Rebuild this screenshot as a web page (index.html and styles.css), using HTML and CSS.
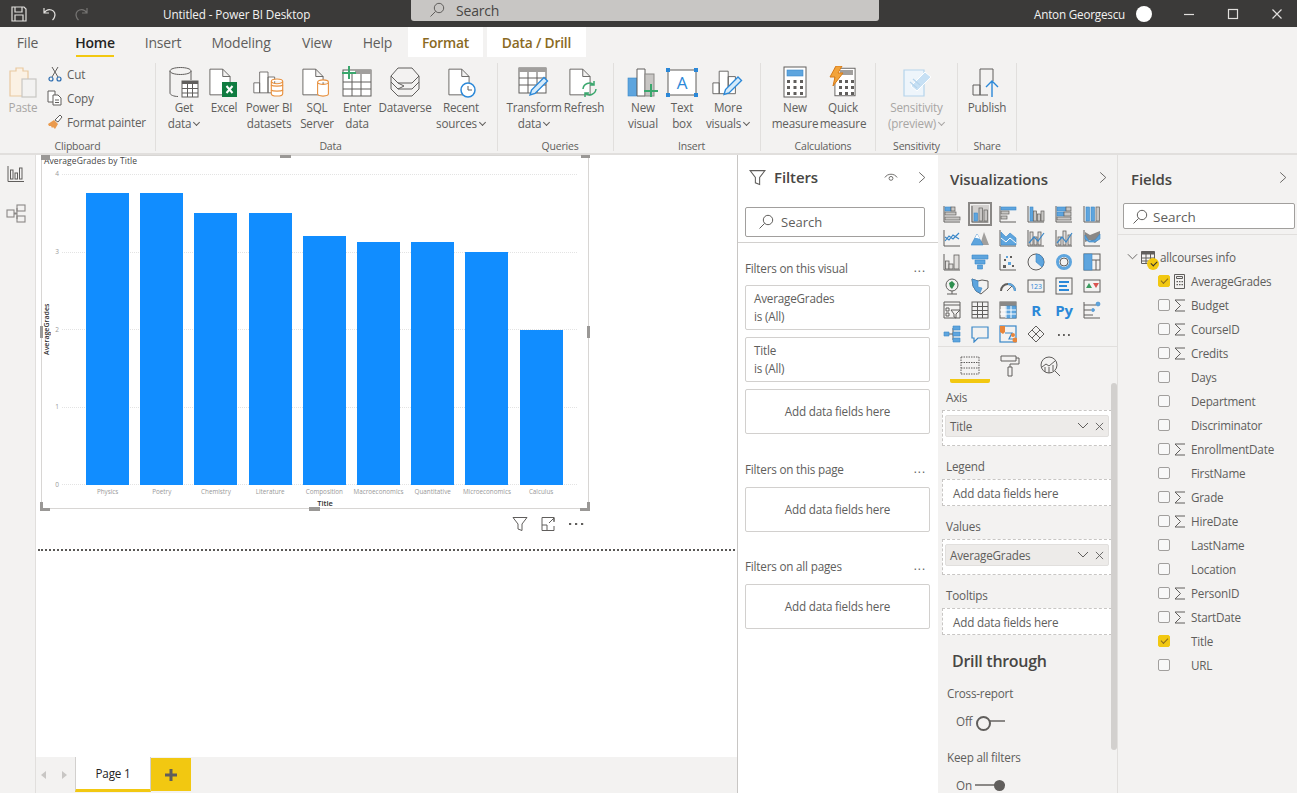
FILE: index.html
```html
<!DOCTYPE html>
<html lang="en">
<head>
<meta charset="utf-8">
<title>Untitled - Power BI Desktop</title>
<link rel="stylesheet" href="styles.css">
</head>
<body>
<svg class="defs" aria-hidden="true">
  <symbol id="search" viewBox="0 0 16 16"><circle cx="10" cy="6" r="4.7" class="s"/><path d="M6.6 9.4 1.5 14.5" class="s"/></symbol>
  <symbol id="chev" viewBox="0 0 10 14"><path d="M2 1.5 8 7l-6 5.5" class="s"/></symbol>
  <symbol id="sigma" viewBox="0 0 13 15"><path d="M12 2H2l5.5 5.5L2 13h10" class="s"/></symbol>
  <symbol id="pencil" viewBox="0 0 20 20"><path d="M15 1.5 18.5 5 6 17.5l-5 1.500 1.500-5z" class="bl"/></symbol>
  <symbol id="cyl" viewBox="0 0 14 20"><path d="M1 3.500v13c0 1.400 2.700 2.500 6 2.500s6-1.100 6-2.500v-13M1 3.500C1 2.100 3.700 1 7 1s6 1.100 6 2.500S10.300 6 7 6 1 4.900 1 3.500" class="or"/></symbol>
  <symbol id="doc" viewBox="0 0 24 30"><path d="M1 1h14l8 8v20H1zM15 1v8h8" class="w"/></symbol>
  <symbol id="bars" viewBox="0 0 30 30"><path d="M1 28V16h7V28zM8 28V3h10v25zM18 28V9h8v19z" class="w"/></symbol>
  <symbol id="calc" viewBox="0 0 24 32"><rect x="1" y="1" width="22" height="30" class="w"/></symbol>
  <symbol id="filter" viewBox="0 0 16 16"><path d="M1 1.500h14L10 8v6.500L6 13V8z" class="s"/></symbol>
  <symbol id="x" viewBox="0 0 10 10"><path d="M1 1l8 8M9 1 1 9" class="s"/></symbol>
  <symbol id="down" viewBox="0 0 12 8"><path d="M1 1l5 5 5-5" class="s"/></symbol>
</svg>

<header class="titlebar">
  <div class="tb-left">
    <svg class="tb-ic" viewBox="0 0 16 16"><path d="M1 1h12l2 2v12H1zM4 1v5h7V1M4 15v-6h8v6" class="lt"/></svg>
    <svg class="tb-ic" viewBox="0 0 16 16"><path d="M2 2v5h5M2 7c2-3 5-4 7.500-3 3 1.200 4 4 3 7-.4 1.200-1.200 2.200-2 3" class="lt"/></svg>
    <svg class="tb-ic tb-dim" viewBox="0 0 16 16"><path d="M14 2v5H9M14 7c-2-3-5-4-7.500-3-3 1.200-4 4-3 7 .4 1.200 1.200 2.200 2 3" class="lt"/></svg>
  </div>
  <div class="tb-title">Untitled - Power BI Desktop</div>
  <div class="tb-search"><svg class="tb-sic"><use href="#search"/></svg><span>Search</span></div>
  <div class="tb-user">Anton Georgescu</div>
  <div class="tb-avatar"></div>
  <div class="tb-win">
    <svg class="win" viewBox="0 0 12 12"><path d="M1 6.500h10" class="lt"/></svg>
    <svg class="win" viewBox="0 0 12 12"><rect x="1.500" y="1.500" width="9" height="9" class="lt"/></svg>
    <svg class="win" viewBox="0 0 12 12"><path d="M1.500 1.500l9 9M10.500 1.500l-9 9" class="lt"/></svg>
  </div>
</header>

<nav class="tabs">
  <div class="tab t-file">File</div>
  <div class="tab t-home">Home</div>
  <div class="tab t-insert">Insert</div>
  <div class="tab t-model">Modeling</div>
  <div class="tab t-view">View</div>
  <div class="tab t-help">Help</div>
  <div class="tab ctx t-format">Format</div>
  <div class="tab ctx t-drill">Data / Drill</div>
</nav>

<section class="ribbon">
  <div class="grp g-clip">
    <div class="btns">
      <div class="rb rb-paste dis">
        <div class="ri"><svg width="30" height="32" viewBox="0 0 30 32"><path d="M2 5h6V2h7v3h5v25H2z" class="paste"/><rect x="14" y="13" width="14" height="18" class="paste2"/></svg></div>
        <span>Paste</span>
      </div>
      <div class="small">
        <div class="sr"><svg class="si" viewBox="0 0 16 16"><path d="M5 1l6 10M11 1 5 11" class="s"/><circle cx="4" cy="13" r="2" class="blo"/><circle cx="12" cy="13" r="2" class="blo"/></svg><span>Cut</span></div>
        <div class="sr"><svg class="si" viewBox="0 0 16 16"><path d="M1 1h7v11H1z" class="w"/><path d="M6 5h5l3 3v7H6zM8 10h4M8 12.500h4" class="w"/></svg><span>Copy</span></div>
        <div class="sr"><svg class="si" viewBox="0 0 16 16"><path d="M1 10l6-4 4 4-3 5-2-2-1 1-1-2-2 0z" fill="#ea9a4d"/><path d="M8 6l5-5 2 2-4 5z" class="w"/></svg><span>Format painter</span></div>
      </div>
    </div>
    <div class="gl">Clipboard</div>
  </div>

  <div class="grp g-data">
    <div class="btns">
      <div class="rb w40">
        <div class="ri"><svg width="30" height="32" viewBox="0 0 30 32"><path d="M1 5v22c0 2 4 3.500 8 3.500M22 5v9M1 5c0-2 4.700-3.500 10.500-3.500S22 3 22 5s-4.700 3.500-10.500 3.500S1 7 1 5" class="s"/><rect x="13" y="15" width="16" height="16" class="w"/><path d="M13 15h16v3H13z" class="d"/><path d="M13 22.500h16M13 27h16M18.500 18v13M23.500 18v13" class="s"/></svg></div>
        <span>Get<br>data<i class="caret"></i></span>
      </div>
      <div class="rb w40">
        <div class="ri"><svg width="30" height="32" viewBox="0 0 30 32"><use href="#doc" width="22" height="30" y="1" x="0"/><rect x="13" y="16" width="15" height="15" fill="#107c41"/><path d="M17.500 20l6 7M23.500 20l-6 7" class="wh"/></svg></div>
        <span>Excel</span>
      </div>
      <div class="rb w50">
        <div class="ri"><svg width="32" height="32" viewBox="0 0 32 32"><use href="#bars" width="25" height="30" y="1"/><use href="#cyl" x="17" y="12" width="14" height="19"/><path d="M18 19c2 1.500 10 1.500 12 0M18 24c2 1.500 10 1.500 12 0" class="or2"/></svg></div>
        <span>Power BI<br>datasets</span>
      </div>
      <div class="rb w46">
        <div class="ri"><svg width="30" height="32" viewBox="0 0 30 32"><use href="#doc" width="22" height="30" y="1"/><use href="#cyl" x="14" y="13" width="14" height="18"/></svg></div>
        <span>SQL<br>Server</span>
      </div>
      <div class="rb w34">
        <div class="ri"><svg width="32" height="32" viewBox="0 0 32 32"><rect x="2" y="4" width="28" height="26" class="w"/><path d="M14 4h16v4H14z" fill="#a19f9d"/><path d="M2 16h28M2 23h28M11 8v22M20 8v22M14 9h-0" class="s"/><path d="M8 0v13M1 7h14" class="gr"/></svg></div>
        <span>Enter<br>data</span>
      </div>
      <div class="rb w62">
        <div class="ri"><svg width="32" height="32" viewBox="0 0 32 32"><path d="M9 2h14l7 8v13l-7 7H9l-7-7V10zM2 10l7 7h14l7-7M2 16l7 7h14l7-7M9 17l6 3-6 3" class="s"/></svg></div>
        <span>Dataverse</span>
      </div>
      <div class="rb w50">
        <div class="ri"><svg width="32" height="32" viewBox="0 0 32 32"><use href="#doc" width="22" height="30" x="3" y="1"/><circle cx="23" cy="24" r="7" class="clk"/><path d="M23 20v4h4" class="s"/></svg></div>
        <span>Recent<br>sources<i class="caret"></i></span>
      </div>
    </div>
    <div class="gl">Data</div>
  </div>

  <div class="grp g-query">
    <div class="btns">
      <div class="rb w54">
        <div class="ri"><svg width="32" height="32" viewBox="0 0 32 32"><rect x="1" y="2" width="27" height="25" class="w"/><path d="M1 2h27v4H1z" fill="#a19f9d"/><path d="M1 12h27M1 19h27M10 6v21M19 6v21" class="s"/><use href="#pencil" x="11" y="9" width="20" height="22"/></svg></div>
        <span>Transform<br>data<i class="caret"></i></span>
      </div>
      <div class="rb w46">
        <div class="ri"><svg width="30" height="32" viewBox="0 0 30 32"><use href="#doc" width="22" height="30" y="1"/><path d="M14 23a6.500 6.500 0 0 1 11-4M27 23a6.500 6.500 0 0 1-11 4M25 15v4h-4M16 31v-4h4" class="gr2"/></svg></div>
        <span>Refresh</span>
      </div>
    </div>
    <div class="gl">Queries</div>
  </div>

  <div class="grp g-insert">
    <div class="btns">
      <div class="rb w40">
        <div class="ri"><svg width="32" height="32" viewBox="0 0 32 32"><rect x="1" y="12" width="9" height="18" class="bf"/><path d="M10 30V3h8v27z" class="w"/><rect x="18" y="8" width="9" height="22" fill="#c8c6c4" stroke="#8a8886"/><path d="M24 18v13M17 25h14" class="gr"/></svg></div>
        <span>New<br>visual</span>
      </div>
      <div class="rb w38">
        <div class="ri"><svg width="32" height="32" viewBox="0 0 32 32"><rect x="2" y="4" width="28" height="25" class="tbx"/><text x="16" y="23" class="tba">A</text><path d="M0 2h4v4H0zM28 2h4v4h-4zM0 27h4v4H0zM28 27h4v4h-4z" fill="#2b88d8"/></svg></div>
        <span>Text<br>box</span>
      </div>
      <div class="rb w54">
        <div class="ri"><svg width="32" height="32" viewBox="0 0 32 32"><use href="#bars" width="27" height="30" y="1"/><use href="#pencil" x="11" y="8" width="20" height="23"/></svg></div>
        <span>More<br>visuals<i class="caret"></i></span>
      </div>
    </div>
    <div class="gl">Insert</div>
  </div>

  <div class="grp g-calc">
    <div class="btns">
      <div class="rb w48">
        <div class="ri"><svg width="26" height="32" viewBox="0 0 26 32"><use href="#calc" x="1" width="24" height="32"/><rect x="5" y="4" width="16" height="6" class="bf"/><path d="M5 14h3v3H5zM11.500 14h3v3h-3zM18 14h3v3h-3zM5 20h3v3H5zM11.500 20h3v3h-3zM18 20h3v3h-3zM5 26h3v3H5zM11.500 26h3v3h-3zM18 26h3v3h-3z" class="d"/></svg></div>
        <span>New<br>measure</span>
      </div>
      <div class="rb w48">
        <div class="ri"><svg width="30" height="32" viewBox="0 0 30 32"><use href="#calc" x="6" width="22" height="32"/><rect x="12" y="4" width="13" height="5" fill="#a19f9d"/><path d="M11 14h3v3h-3zM17 14h3v3h-3zM23 14h3v3h-3zM11 20h3v3h-3zM17 20h3v3h-3zM23 20h3v3h-3zM11 26h3v3h-3zM17 26h3v3h-3zM23 26h3v3h-3z" class="d"/><path d="M8 0h6l-4 7h5L5 20l2-9H2z" fill="#f2a33a" stroke="#d87b16"/></svg></div>
        <span>Quick<br>measure</span>
      </div>
    </div>
    <div class="gl">Calculations</div>
  </div>

  <div class="grp g-sens">
    <div class="btns">
      <div class="rb full dis">
        <div class="ri"><svg width="32" height="32" viewBox="0 0 32 32"><path d="M3 4h20v26H3z" class="sens"/><path d="M10 20 24 6l6 5-14 14z" fill="#c7e0f4" stroke="#fff"/><path d="M9 16l7 6M12 13l7 6" class="sens"/></svg></div>
        <span>Sensitivity<br>(preview)<i class="caret"></i></span>
      </div>
    </div>
    <div class="gl">Sensitivity</div>
  </div>

  <div class="grp g-share">
    <div class="btns">
      <div class="rb full">
        <div class="ri"><svg width="32" height="32" viewBox="0 0 32 32"><path d="M2 29V19h7v10zM9 29V3h13v12M9 29h8" class="s"/><path d="M21 31V15M15 21l6-6 6 6" class="bs"/></svg></div>
        <span>Publish</span>
      </div>
    </div>
    <div class="gl">Share</div>
  </div>
</section>

<main class="main">
  <aside class="rail">
    <svg class="rail-ic" viewBox="0 0 18 18"><path d="M1 1v15.500h16" class="s"/><rect x="3.500" y="5" width="2.500" height="9" class="s"/><rect x="8" y="8" width="2.500" height="6" class="s"/><rect x="12.500" y="3" width="2.500" height="11" class="s"/></svg>
    <svg class="rail-ic ri2" viewBox="0 0 20 20"><rect x="1" y="6" width="7" height="7" class="m"/><rect x="11" y="1" width="8" height="6" class="m"/><rect x="11" y="12" width="8" height="6" class="m"/><path d="M8 9h3V4M8 10h3v5" class="m"/></svg>
  </aside>

  <div class="canvas">
    <div class="page">
      <div class="visual">
        <i class="h h-tl"></i><i class="h h-tm"></i><i class="h h-tr"></i><i class="h h-ml"></i><i class="h h-mr"></i><i class="h h-bl"></i><i class="h h-bm"></i><i class="h h-br"></i>
        <div class="v-title">AverageGrades by Title</div>
        <div class="v-chart">
          <div class="y-title">AverageGrades</div>
          <div class="y-labels"><span>4</span><span>3</span><span>2</span><span>1</span><span>0</span></div>
          <div class="plot">
            <div class="grid"><i></i><i></i><i></i><i></i><i></i></div>
            <div class="bars">
              <div class="slot"><div class="bar" style="height:93.75%"></div></div>
              <div class="slot"><div class="bar" style="height:93.75%"></div></div>
              <div class="slot"><div class="bar" style="height:87.5%"></div></div>
              <div class="slot"><div class="bar" style="height:87.5%"></div></div>
              <div class="slot"><div class="bar" style="height:80%"></div></div>
              <div class="slot"><div class="bar" style="height:78.25%"></div></div>
              <div class="slot"><div class="bar" style="height:78.25%"></div></div>
              <div class="slot"><div class="bar" style="height:75%"></div></div>
              <div class="slot"><div class="bar" style="height:50%"></div></div>
            </div>
          </div>
        </div>
        <div class="cats"><span>Physics</span><span>Poetry</span><span>Chemistry</span><span>Literature</span><span>Composition</span><span>Macroeconomics</span><span>Quantitative</span><span>Microeconomics</span><span>Calculus</span></div>
        <div class="x-title">Title</div>
      </div>
      <div class="v-ctrl">
        <svg class="vc"><use href="#filter"/></svg>
        <svg class="vc" viewBox="0 0 16 16"><path d="M14 6V1.500H2v13h12V10M2 9h5v5.500M9 7l5-5M10 1.500h4v4" class="s"/></svg>
        <svg class="vc" viewBox="0 0 16 16"><path d="M1 8h2.200M7 8h2.200M13 8h2.200" class="dots"/></svg>
      </div>
      <div class="page-end"></div>
    </div>
    <div class="pagebar">
      <div class="arrows"><i class="al"></i><i class="ar"></i></div>
      <div class="ptab">Page 1</div>
      <div class="padd"><svg width="12" height="12" viewBox="0 0 12 12"><path d="M6 0v12M0 6h12" class="plus"/></svg></div>
    </div>
  </div>

  <aside class="filters">
    <div class="f-head">
      <svg class="f-fn"><use href="#filter"/></svg>
      <h2>Filters</h2>
      <svg class="f-eye" viewBox="0 0 16 12"><path d="M1 6c3-5 11-5 14 0" class="s"/><circle cx="8" cy="7" r="2.200" class="s"/></svg>
      <svg class="f-ch"><use href="#chev"/></svg>
    </div>
    <div class="searchbox f-search"><svg class="sb-ic"><use href="#search"/></svg><span>Search</span></div>
    <div class="f-rule"></div>
    <div class="f-sec first"><div class="f-h"><span>Filters on this visual</span><b>...</b></div>
      <div class="f-card">AverageGrades<br>is (All)</div>
      <div class="f-card">Title<br>is (All)</div>
      <div class="f-card add">Add data fields here</div>
    </div>
    <div class="f-sec sec-page"><div class="f-h"><span>Filters on this page</span><b>...</b></div>
      <div class="f-card add">Add data fields here</div>
    </div>
    <div class="f-sec sec-all"><div class="f-h"><span>Filters on all pages</span><b>...</b></div>
      <div class="f-card add">Add data fields here</div>
    </div>
  </aside>

  <aside class="viz">
    <div class="p-head"><h2>Visualizations</h2><svg class="p-ch"><use href="#chev"/></svg></div>
    <div class="vgrid">
      <div class="vi"><svg viewBox="0 0 18 18"><path d="M1 1v16h16" class="s"/><rect x="2" y="2" width="6" height="4" class="bf"/><rect x="8" y="2" width="4" height="4" class="g1"/><rect x="2" y="7" width="11" height="3" class="g1"/><rect x="2" y="12" width="15" height="3" class="g1"/></svg></div>
      <div class="vi sel"><svg viewBox="0 0 18 18"><path d="M1 1v16h16" class="s"/><rect x="3" y="8" width="3.500" height="8" class="bf"/><rect x="8" y="3" width="3.500" height="13" class="g1"/><rect x="13" y="5" width="3.500" height="11" class="g1"/></svg></div>
      <div class="vi"><svg viewBox="0 0 18 18"><path d="M1 1v16h16" class="s"/><rect x="2" y="2" width="15" height="3" class="bf"/><rect x="2" y="6" width="8" height="3" class="g1"/><rect x="2" y="11" width="6" height="3" class="g1"/></svg></div>
      <div class="vi"><svg viewBox="0 0 18 18"><path d="M1 1v16h16" class="s"/><rect x="3" y="2" width="3" height="14" class="bf"/><rect x="6.500" y="6" width="3" height="10" class="g1"/><rect x="10.500" y="9" width="3" height="7" class="g1"/><rect x="14" y="6" width="3" height="10" class="g1"/></svg></div>
      <div class="vi"><svg viewBox="0 0 18 18"><path d="M1 1v16h16" class="s"/><rect x="2" y="2" width="9" height="4" class="bf"/><rect x="11" y="2" width="5" height="4" class="g1"/><rect x="2" y="7" width="7" height="4" class="bf"/><rect x="9" y="7" width="7" height="4" class="g1"/><rect x="2" y="12" width="14" height="3" class="g1"/></svg></div>
      <div class="vi"><svg viewBox="0 0 18 18"><path d="M1 1v16h16" class="s"/><rect x="3" y="2" width="3.500" height="14" class="bf"/><rect x="8" y="2" width="3.500" height="14" class="bf"/><rect x="13" y="2" width="3.500" height="14" class="g1"/></svg></div>

      <div class="vi"><svg viewBox="0 0 18 18"><path d="M1 1v16h16" class="s"/><path d="M2 12l4-5 4 3 6-6M2 8l4 3 4-5 6 4" class="bs1"/></svg></div>
      <div class="vi"><svg viewBox="0 0 18 18"><path d="M9 16 13 3l5 13z" fill="#a19f9d"/><path d="M0 16 6 5l6 11z" class="bf"/><path d="M4 9l2-4 3 5-3-1z" fill="#fff"/></svg></div>
      <div class="vi"><svg viewBox="0 0 18 18"><path d="M1 1v16h16" class="s"/><path d="M2 3l5 5 4-4 6 5v7H2z" class="bf"/><path d="M2 9l5 4 4-4 6 5" stroke="#fff" fill="none"/></svg></div>
      <div class="vi"><svg viewBox="0 0 18 18"><path d="M1 1v16h16" class="s"/><rect x="3" y="3" width="3" height="13" class="g2"/><rect x="7" y="8" width="3" height="8" class="g2"/><rect x="11" y="3" width="3" height="13" class="g2"/><path d="M2 14l5-6 4 4 6-8" class="bs1"/></svg></div>
      <div class="vi"><svg viewBox="0 0 18 18"><path d="M1 1v16h16" class="s"/><rect x="3" y="8" width="3" height="8" class="g2"/><rect x="8" y="2" width="3" height="14" class="g2"/><rect x="13" y="6" width="3" height="10" class="g2"/><path d="M2 14l5-6 4 5 6-9" class="bs1"/></svg></div>
      <div class="vi"><svg viewBox="0 0 18 18"><path d="M1 1v16h16" class="s"/><path d="M2 3l5 3 5-2 5-2v7l-5 5-5-3-5 2z" fill="#8a8886"/><path d="M2 6l4 6 6-1 5-6v5l-5 3-6 0-4-3z" class="bf"/></svg></div>

      <div class="vi"><svg viewBox="0 0 18 18"><path d="M1 1v16h16" class="s"/><rect x="2.500" y="8" width="3.500" height="8" class="g2"/><rect x="6" y="11" width="4" height="5" class="g2"/><rect x="11" y="2" width="5" height="14" class="g2"/></svg></div>
      <div class="vi"><svg viewBox="0 0 18 18"><path d="M1 2h16v4H1zM4 7h10v4H4zM6.500 12h5v4h-5z" class="bf"/></svg></div>
      <div class="vi"><svg viewBox="0 0 18 18"><path d="M1 1v16h16" class="s"/><path d="M5 6h2v2H5zM11 3h2v2h-2zM4 12h3v3H4zM13 12h2v2h-2z" class="d"/><path d="M7 3h2v2H7zM9 9h3v3H9z" fill="#5ea5de"/></svg></div>
      <div class="vi"><svg viewBox="0 0 18 18"><circle cx="9" cy="9" r="8" class="s"/><path d="M9 1a8 8 0 0 1 6 13L9 9z" class="bf"/></svg></div>
      <div class="vi"><svg viewBox="0 0 18 18"><circle cx="9" cy="9" r="6.500" fill="none" stroke="#5ea5de" stroke-width="3"/><circle cx="9" cy="9" r="4" class="s"/></svg></div>
      <div class="vi"><svg viewBox="0 0 18 18"><rect x="1" y="1" width="16" height="16" class="s"/><rect x="1" y="1" width="8" height="16" class="bf"/><path d="M9 7h8M13 7v10" class="s"/></svg></div>

      <div class="vi"><svg viewBox="0 0 18 18"><circle cx="9" cy="8" r="6" class="s"/><path d="M6 6l3-2 3 3-3 5-2-2z" fill="#2f8f4f"/><path d="M4 17h10M9 14v3" class="s"/></svg></div>
      <div class="vi"><svg viewBox="0 0 18 18"><path d="M1 2l6 2 4-1 6 1v7l-7 6-5-3-3-5z" class="s"/><path d="M1 2l6 2 0 6 4 1-2 5-4-2-3-5z" class="bf"/></svg></div>
      <div class="vi"><svg viewBox="0 0 18 18"><path d="M2 14a7 7 0 0 1 14 0" fill="none" stroke="#605e5c" stroke-width="2"/><path d="M9 7a7 7 0 0 1 7 7" fill="none" stroke="#5ea5de" stroke-width="2"/><path d="M8 14l5-5" class="s"/></svg></div>
      <div class="vi"><svg viewBox="0 0 18 18"><rect x="1" y="3" width="16" height="12" class="s"/><text x="9" y="12" class="t123">123</text></svg></div>
      <div class="vi"><svg viewBox="0 0 18 18"><rect x="1" y="1" width="16" height="16" class="s"/><path d="M4 5h10M4 9h8M4 13h10" class="bs2"/></svg></div>
      <div class="vi"><svg viewBox="0 0 18 18"><rect x="1" y="3" width="16" height="12" class="s"/><path d="M3 11l3-5 3 5z" fill="#3a9c5f"/><path d="M10 6h6l-3 5z" fill="#d9534f"/></svg></div>

      <div class="vi"><svg viewBox="0 0 18 18"><path d="M1 1h16v16H1zM1 4h16M3 7h3v3H3zM3 12h3v3H3z" class="s"/><path d="M8 9h9l-4 4v4l-2-1v-3z" fill="#f3f2f1" stroke="#605e5c"/></svg></div>
      <div class="vi"><svg viewBox="0 0 18 18"><rect x="1" y="1" width="16" height="16" class="s"/><path d="M1 5.500h16M1 9.500h16M1 13.500h16M6.500 1v16M11.500 1v16" class="s"/></svg></div>
      <div class="vi"><svg viewBox="0 0 18 18"><rect x="1" y="1" width="16" height="16" class="s"/><rect x="1" y="1" width="16" height="4" fill="#8a8886"/><rect x="7" y="5" width="10" height="12" class="bf"/><path d="M1 9h16M1 13h16M7 5v12M12 5v12" stroke="#fff" fill="none"/></svg></div>
      <div class="vi vt"><span class="rr">R</span></div>
      <div class="vi vt"><span class="py">Py</span></div>
      <div class="vi"><svg viewBox="0 0 18 18"><path d="M1 1v16h16M1 4h12M1 9h7M1 14h9" class="s"/><circle cx="15" cy="3" r="2" class="bf"/><circle cx="10" cy="9" r="1.500" class="bf"/></svg></div>

      <div class="vi"><svg viewBox="0 0 18 18"><path d="M5 9h5M10 3v12" class="s"/><path d="M1 7h5v4H1zM10 1h7v4h-7zM10 7h7v4h-7zM10 13h7v4h-7z" class="bf"/></svg></div>
      <div class="vi"><svg viewBox="0 0 18 18"><path d="M1 2h16v11H7l-4 4v-4H1z" class="bs1"/></svg></div>
      <div class="vi"><svg viewBox="0 0 18 18"><rect x="1" y="1" width="16" height="16" class="bs1"/><path d="M1 1h5v6l-2 2-3-2z" fill="#e8853a"/><path d="M6 8h7l-3 6h7" class="bs1"/><circle cx="14" cy="10" r="2" fill="#e8853a"/><circle cx="16" cy="15" r="2.500" fill="#e8853a"/></svg></div>
      <div class="vi"><svg viewBox="0 0 18 18"><path d="M9 1l8 8-8 8-8-8zM5 5l4 4 4-4M5 13l4-4 4 4" class="s"/></svg></div>
      <div class="vi vt"><svg viewBox="0 0 18 18"><path d="M3 10h1.800M8 10h1.800M13 10h1.800" class="dots"/></svg></div>
    </div>
    <div class="v-tabs">
      <div class="vtab on"><svg viewBox="0 0 22 22"><path d="M2 2h18M2 7.500h18M2 13h18M2 19h18M2 2v17M20 2v17" class="dash"/></svg></div>
      <div class="vtab"><svg viewBox="0 0 22 22"><path d="M2 1h15v5H2zM17 3h3v6h-9v3M9 12h4v9H9z" class="s"/></svg></div>
      <div class="vtab"><svg viewBox="0 0 22 22"><circle cx="10" cy="10" r="8" class="s"/><path d="M3 12l4-3 3 2 6-5M6 12v5M10 12v6M14 10v6M16 16l5 5" class="s"/></svg></div>
    </div>
    <div class="wells">
      <div class="wl">Axis</div>
      <div class="well w-chip"><div class="chip"><span>Title</span><svg class="c-d"><use href="#down"/></svg><svg class="c-x"><use href="#x"/></svg></div></div>
      <div class="wl">Legend</div>
      <div class="well w-add">Add data fields here</div>
      <div class="wl">Values</div>
      <div class="well w-chip"><div class="chip"><span>AverageGrades</span><svg class="c-d"><use href="#down"/></svg><svg class="c-x"><use href="#x"/></svg></div></div>
      <div class="wl">Tooltips</div>
      <div class="well w-add">Add data fields here</div>
      <h3>Drill through</h3>
      <div class="dl">Cross-report</div>
      <div class="tg"><span>Off</span><i class="tg-off"></i></div>
      <div class="dl d2">Keep all filters</div>
      <div class="tg"><span>On</span><i class="tg-on"></i></div>
    </div>
    <div class="scroll"></div>
  </aside>

  <aside class="fields">
    <div class="p-head"><h2>Fields</h2><svg class="p-ch"><use href="#chev"/></svg></div>
    <div class="searchbox fl-search"><svg class="sb-ic"><use href="#search"/></svg><span>Search</span></div>
    <div class="fl-rule"></div>
    <div class="tbl">
      <svg class="tbl-ch"><use href="#down"/></svg>
      <div class="tbl-ic"><svg viewBox="0 0 14 13"><path d="M.5.500h13v12H.5z" class="s"/><path d="M.5.500h13v3H.5z" class="d"/><path d="M.5 7h13M.5 10h13M5 3v9M9.500 3v9" class="s"/></svg><i class="badge"></i></div>
      <span>allcourses info</span>
    </div>
    <div class="fr"><i class="cb on"></i><svg class="fi" viewBox="0 0 13 15"><path d="M1.500.500h10v14h-10z" class="s"/><path d="M3.500 2.500h6v2h-6z" class="s"/><path d="M3.500 7h1.500v1.300H3.500zM6 7h1.500v1.300H6zM8.500 7h1.500v1.300H8.500zM3.500 10h1.500v1.300H3.500zM6 10h1.500v1.300H6zM8.500 10h1.500v1.300H8.500z" class="d"/></svg><span>AverageGrades</span></div>
    <div class="fr"><i class="cb"></i><svg class="fi"><use href="#sigma"/></svg><span>Budget</span></div>
    <div class="fr"><i class="cb"></i><svg class="fi"><use href="#sigma"/></svg><span>CourseID</span></div>
    <div class="fr"><i class="cb"></i><svg class="fi"><use href="#sigma"/></svg><span>Credits</span></div>
    <div class="fr"><i class="cb"></i><svg class="fi"></svg><span>Days</span></div>
    <div class="fr"><i class="cb"></i><svg class="fi"></svg><span>Department</span></div>
    <div class="fr"><i class="cb"></i><svg class="fi"></svg><span>Discriminator</span></div>
    <div class="fr"><i class="cb"></i><svg class="fi"><use href="#sigma"/></svg><span>EnrollmentDate</span></div>
    <div class="fr"><i class="cb"></i><svg class="fi"></svg><span>FirstName</span></div>
    <div class="fr"><i class="cb"></i><svg class="fi"><use href="#sigma"/></svg><span>Grade</span></div>
    <div class="fr"><i class="cb"></i><svg class="fi"><use href="#sigma"/></svg><span>HireDate</span></div>
    <div class="fr"><i class="cb"></i><svg class="fi"></svg><span>LastName</span></div>
    <div class="fr"><i class="cb"></i><svg class="fi"></svg><span>Location</span></div>
    <div class="fr"><i class="cb"></i><svg class="fi"><use href="#sigma"/></svg><span>PersonID</span></div>
    <div class="fr"><i class="cb"></i><svg class="fi"><use href="#sigma"/></svg><span>StartDate</span></div>
    <div class="fr"><i class="cb on"></i><svg class="fi"></svg><span>Title</span></div>
    <div class="fr"><i class="cb"></i><svg class="fi"></svg><span>URL</span></div>
  </aside>
</main>
</body>
</html>
```

FILE: styles.css
```css
* { box-sizing: border-box; }
html, body { margin: 0; height: 100%; }
body {
  width: 1297px; height: 793px; overflow: hidden;
  font-family: "Open Sans", "Noto Sans", "Liberation Sans", sans-serif;
  font-size: 11.7px; letter-spacing: -.2px; color: #605e5c; background: #f3f2f1;
  display: flex; flex-direction: column;
}
h2, h3 { margin: 0; }
i { font-style: normal; }
.defs { width: 0; height: 0; position: absolute; }

/* svg paint classes */
.s { fill: none; stroke: #605e5c; stroke-width: 1; }
.w { fill: #fff; stroke: #605e5c; stroke-width: 1; }
.d { fill: #605e5c; }
.lt { fill: none; stroke: #e1dfdd; stroke-width: 1.2; }
.or { fill: #fff; stroke: #e8913f; stroke-width: 1.2; }
.or2 { fill: none; stroke: #e8913f; stroke-width: 1.2; }
.bl { fill: #d6ebfa; stroke: #2b88d8; stroke-width: 1.4; }
.bf { fill: #5ea5de; stroke: #3a87c8; stroke-width: .6; }
.bs { fill: none; stroke: #2b88d8; stroke-width: 1.4; }
.bs1 { fill: none; stroke: #3a87c8; stroke-width: 1.2; }
.bs2 { fill: none; stroke: #2b88d8; stroke-width: 1.8; }
.blo { fill: none; stroke: #2b6cb0; stroke-width: 1.2; }
.wh { fill: none; stroke: #fff; stroke-width: 2; }
.gr { fill: none; stroke: #3aa76d; stroke-width: 2; }
.gr2 { fill: none; stroke: #3aa76d; stroke-width: 1.5; }
.g1 { fill: #c8c6c4; stroke: #605e5c; stroke-width: .7; }
.g2 { fill: #e1dfdd; stroke: #605e5c; stroke-width: .8; }
.m { fill: none; stroke: #8a8886; stroke-width: 1.1; }
.clk { fill: #fff; stroke: #2b88d8; stroke-width: 1.5; }
.tbx { fill: #fff; stroke: #605e5c; stroke-width: 1; }
.tba { font-size: 17px; fill: #2b88d8; text-anchor: middle; font-family: "Open Sans", sans-serif; }
.paste { fill: #fbf1e4; stroke: #e9c9a0; stroke-width: 1.2; }
.paste2 { fill: #f3f2f1; stroke: #c8c6c4; stroke-width: 1.2; }
.sens { fill: #eef5fb; stroke: #b5d4ec; stroke-width: 1.2; }
.dots { fill: none; stroke: #605e5c; stroke-width: 2; }
.plus { fill: none; stroke: #605e5c; stroke-width: 3; }
.dash { fill: none; stroke: #605e5c; stroke-width: 1; stroke-dasharray: 1.500 1; }
.t123 { font-size: 7px; fill: #2b88d8; text-anchor: middle; font-family: "Open Sans", sans-serif; }

/* title bar */
.titlebar {
  height: 27px; flex: none; background: #3b3a39; color: #f3f2f1;
  display: flex; align-items: center;
}
.tb-left { width: 163px; padding-left: 11px; display: flex; gap: 15px; flex: none; }
.tb-ic { width: 16px; height: 16px; }
.tb-dim { opacity: .35; }
.tb-title { width: 248px; flex: none; letter-spacing: -.1px; }
.tb-search {
  width: 468px; height: 21px; flex: none; align-self: flex-start; background: #c8c6c4;
  border-radius: 0 0 3px 3px; display: flex; align-items: center; padding: 0 0 1px 18px;
  color: #484644; font-size: 14px; gap: 11px;
}
.tb-sic { width: 16px; height: 16px; }
.tb-user { margin-left: 155px; width: 102px; flex: none; white-space: nowrap; }
.tb-avatar { width: 16px; height: 16px; border-radius: 50%; background: #fff; flex: none; }
.tb-win { display: flex; margin-left: 31px; gap: 32px; }
.win { width: 12px; height: 12px; }

/* tabs */
.tabs { height: 30px; flex: none; display: flex; background: #f3f2f1; font-size: 14px; }
.tab { display: flex; align-items: center; justify-content: center; position: relative; color: #605e5c; padding-top: 1px; }
.t-file { width: 55px; }
.t-home { width: 80px; color: #252423; font-weight: 600; }
.t-home::after { content: ""; position: absolute; left: 21px; width: 38px; bottom: 0; height: 2px; background: #f2c811; }
.t-insert { width: 56px; }
.t-model { width: 100px; }
.t-view { width: 52px; }
.t-help { width: 65px; padding-left: 4px; }
.ctx { background: #fff; color: #8a6a1f; font-weight: 600; font-size: 13.8px; }
.t-format { width: 75px; margin-right: 4px; }
.t-drill { width: 99px; }

/* ribbon */
.ribbon { height: 98px; flex: none; display: flex; padding-top: 6px; background: #f3f2f1; border-bottom: 2px solid #e1dfdd; }
.grp { display: flex; flex-direction: column; height: 88px; border-right: 1px solid #e1dfdd; }
.btns { height: 76px; display: flex; padding-top: 1px; }
.gl { height: 12px; line-height: 14px; text-align: center; font-size: 10.5px; color: #605e5c; }
.g-clip { width: 156px; }
.g-data { width: 342px; padding-left: 8px; }
.g-query { width: 116px; padding-left: 9px; }
.g-insert { width: 147px; padding-left: 9px; }
.g-calc { width: 115px; padding-left: 10px; }
.g-sens { width: 82px; }
.g-share { width: 59px; }
.rb { display: flex; flex-direction: column; align-items: center; text-align: center; line-height: 16px; white-space: nowrap; flex: none; }
.ri { height: 35px; display: flex; align-items: flex-start; justify-content: center; padding-top: 2px; }
.dis { color: #a8a6a4; }
.w34 { width: 34px; } .w38 { width: 38px; } .w40 { width: 40px; } .w46 { width: 46px; }
.w48 { width: 48px; } .w50 { width: 50px; } .w54 { width: 54px; } .w62 { width: 62px; }
.full { width: 100%; }
.rb-paste { width: 46px; }
.caret { display: inline-block; width: 5px; height: 5px; margin: 0 1px 3px 3px; border-right: 1.2px solid currentColor; border-bottom: 1.2px solid currentColor; transform: rotate(45deg); }
.small { padding-left: 1px; margin-top: -2px; }
.sr { height: 24px; display: flex; align-items: center; gap: 4px; white-space: nowrap; }
.si { width: 16px; height: 16px; flex: none; }

/* main */
.main { flex: 1; min-height: 0; display: flex; }
.rail { width: 36px; flex: none; background: #f3f2f1; border-right: 1px solid #e1dfdd; display: flex; flex-direction: column; align-items: center; padding: 10px 3px 0 0; }
.rail-ic { width: 18px; height: 18px; }
.ri2 { margin-top: 21px; width: 20px; height: 20px; }

.canvas { width: 701px; flex: none; display: flex; flex-direction: column; background: #fff; }
.page { flex: 1; min-height: 0; }
.visual { position: relative; width: 548px; height: 354px; margin-left: 5px; border: 1px solid #d8d6d4; background: #fff; letter-spacing: 0; }
.h { position: absolute; background: #9a9896; }
.h-tl { left: -1px; top: -1px; width: 9px; height: 5px; }
.h-tm { left: 238px; top: -1px; width: 11px; height: 3px; }
.h-tr { right: -2px; top: -1px; width: 9px; height: 3px; }
.h-ml { left: -2px; top: 170px; width: 3px; height: 12px; }
.h-mr { right: -2px; top: 170px; width: 3px; height: 12px; }
.h-bl { left: -2px; bottom: -3px; width: 10px; height: 9px; background: none; border-left: 3px solid #9a9896; border-bottom: 3px solid #9a9896; }
.h-bm { left: 267px; bottom: -3px; width: 11px; height: 4px; }
.h-br { right: -2px; bottom: -3px; width: 10px; height: 9px; background: none; border-right: 3px solid #9a9896; border-bottom: 3px solid #9a9896; }
.v-title { height: 10px; line-height: 10px; font-size: 8.5px; letter-spacing: .1px; color: #444; padding-left: 2px; white-space: nowrap; }
.v-chart { display: flex; height: 311px; margin-top: 8px; }
.y-title { width: 10px; writing-mode: vertical-rl; transform: rotate(180deg); text-align: center; font-size: 7px; font-weight: 600; color: #333; line-height: 10px; white-space: nowrap; }
.y-labels { width: 10px; display: flex; flex-direction: column; justify-content: space-between; align-items: center; font-size: 6.5px; color: #999; }
.y-labels span { height: 0; line-height: 0; }
.plot { position: relative; width: 515px; height: 311px; padding-left: 18.5px; }
.grid { position: absolute; inset: 0; display: flex; flex-direction: column; justify-content: space-between; }
.grid i { display: block; height: 0; border-top: 1px dotted #e3e3e3; }
.bars { position: relative; display: flex; height: 100%; }
.slot { width: 54.2px; height: 100%; display: flex; justify-content: center; align-items: flex-end; }
.bar { width: 43px; background: #118dff; }
.cats { display: flex; height: 12px; margin-left: 38.5px; align-items: center; font-size: 6.3px; color: #999; }
.cats span { width: 54.2px; text-align: center; white-space: nowrap; }
.x-title { height: 10px; line-height: 10px; text-align: center; font-size: 7.5px; font-weight: 600; color: #333; padding-left: 18px; margin-left: 2px; margin-top: 1px; }
.v-ctrl { width: 548px; margin-left: 5px; height: 16px; margin-top: 7px; display: flex; justify-content: flex-end; gap: 12px; padding-right: 5px; }
.vc { width: 16px; height: 16px; }
.page-end { width: 697px; margin: 17px 0 0 2px; border-top: 2px dotted #5a5856; }
.pagebar { height: 36px; flex: none; background: #f3f2f1; display: flex; }
.arrows { width: 39px; display: flex; gap: 16px; align-items: center; padding-left: 5px; }
.al, .ar { width: 0; height: 0; border-top: 4px solid transparent; border-bottom: 4px solid transparent; }
.al { border-right: 5px solid #c8c6c4; }
.ar { border-left: 5px solid #c8c6c4; }
.ptab { width: 76px; height: 35px; background: #fff; border-left: 1px solid #d2d0ce; border-right: 1px solid #d2d0ce; border-bottom: 3px solid #f2c811; display: flex; align-items: center; justify-content: center; color: #252423; }
.padd { width: 40px; height: 33px; margin-top: 1px; background: #f2c811; display: flex; align-items: center; justify-content: center; }

/* filters */
.filters { width: 201px; flex: none; background: #fff; border-left: 1px solid #c8c6c4; }
.f-head { height: 52px; display: flex; align-items: center; padding: 0 11px 8px 11px; position: relative; }
.f-head h2 { font-size: 15px; font-weight: 600; letter-spacing: -.1px; color: #484644; margin-left: 8px; }
.f-fn { width: 17px; height: 17px; }
.f-eye { width: 14px; height: 11px; margin-left: auto; }
.f-ch { width: 10px; height: 13px; margin-left: 19px; }
.searchbox { display: flex; align-items: center; background: #fff; border: 1px solid #a19f9d; border-radius: 2px; font-size: 13px; letter-spacing: 0; color: #605e5c; }
.sb-ic { width: 16px; height: 16px; }
.f-search { width: 180px; height: 30px; margin-left: 7px; padding-left: 12px; gap: 7px; }
.f-rule { height: 6px; border-bottom: 1px solid #d2d0ce; }
.f-sec { padding: 0 8px 0 7px; }
.f-sec.first { margin-top: 17px; }
.f-sec.sec-page { margin-top: 27px; }
.f-sec.sec-all { margin-top: 26px; }
.f-h { height: 16px; margin-bottom: 9px; display: flex; justify-content: space-between; align-items: center; line-height: 16px; white-space: nowrap; }
.sec-page .f-h { margin-bottom: 10px; }
.sec-all .f-h { margin-bottom: 10px; }
.f-h b { font-weight: 400; letter-spacing: 1px; padding-right: 4px; margin-top: -3px; }
.f-card { height: 45px; margin-bottom: 7px; border: 1px solid #d2d0ce; border-radius: 2px; padding: 3px 8px; line-height: 18px; background: #fff; }
.f-card.add { display: flex; align-items: center; justify-content: center; padding-bottom: 4px; }

/* viz */
.p-head { height: 48px; display: flex; align-items: center; justify-content: space-between; padding-left: 12px; flex: none; }
.p-head h2 { font-size: 15px; font-weight: 600; letter-spacing: -.1px; color: #484644; white-space: nowrap; }
.p-ch { width: 10px; height: 13px; margin: -4px 9px 0 0; }
.viz { width: 180px; flex: none; position: relative; overflow: hidden; border-right: 1px solid #e1dfdd; background: #f3f2f1; }
.vgrid { display: grid; grid-template-columns: repeat(6, 28px); grid-auto-rows: 24px; height: 145px; margin-top: -1px; border-bottom: 1px solid #e1dfdd; }
.vi { display: flex; align-items: center; justify-content: center; }
.vi svg { width: 18px; height: 18px; }
.vi.sel svg { background: #d2d0ce; outline: 2px solid #8a8886; outline-offset: 1px; }
.rr, .py { color: #2b88d8; font-weight: 700; font-size: 15px; line-height: 1; }
.v-tabs { display: flex; height: 36px; padding-left: 12px; }
.vtab { width: 40px; display: flex; justify-content: center; align-items: flex-start; padding-top: 8px; }
.vtab svg { width: 22px; height: 22px; }
.vtab.on { border-bottom: 4px solid #f2c811; border-radius: 2px; }
.wells { padding-left: 4px; }
.wl { height: 16px; line-height: 16px; padding-left: 4px; margin: 12px 0 5px; }
.wl:first-child { margin-top: 6px; }
.well { width: 170px; border: 1px dashed #c8c6c4; background: #fff; }
.w-chip { height: 36px; padding: 4px 2px; }
.w-add { height: 27px; display: flex; align-items: center; padding-left: 10px; }
.chip { height: 22px; background: #edebe9; border: 1px solid #e1dfdd; border-radius: 2px; display: flex; align-items: center; padding-left: 4px; }
.chip span { flex: 1; }
.c-d { width: 12px; height: 8px; margin-right: 6px; }
.c-x { width: 9px; height: 9px; margin-right: 4px; }
.wells h3 { font-size: 16px; font-weight: 600; letter-spacing: -.3px; color: #484644; line-height: 22px; padding-left: 10px; margin-top: 15px; }
.dl { height: 16px; line-height: 16px; padding-left: 5px; margin-top: 13px; }
.dl.d2 { margin-top: 18px; }
.tg { height: 20px; margin-top: 10px; padding-left: 14px; display: flex; align-items: center; }
.tg-off, .tg-on { display: block; position: relative; height: 2px; background: #8a8886; }
.tg-on { width: 30px; margin-left: 3px; }
.tg-off { margin-left: 9px; width: 24px; }
.tg-off::before, .tg-on::before { content: ""; position: absolute; top: -4.5px; width: 11px; height: 11px; border-radius: 50%; }
.tg-off::before { left: -5px; background: #f3f2f1; border: 2px solid #605e5c; }
.tg-on::before { right: 0; background: #605e5c; }
.scroll { position: absolute; right: 0; top: 228px; width: 6px; height: 367px; border-radius: 3px; background: #d2d0ce; }

/* fields */
.fields { width: 179px; flex: none; background: #f3f2f1; overflow: hidden; }
.fields .p-head { padding-left: 13px; }
.fl-search { width: 172px; height: 26px; margin-left: 5px; padding: 1px 0 0 8px; gap: 5px; font-size: 13.5px; }
.fl-rule { height: 6px; border-bottom: 1px solid #e1dfdd; }
.tbl { height: 24px; margin-top: 10px; display: flex; align-items: center; padding-left: 9px; }
.tbl-ch { width: 11px; height: 8px; flex: none; }
.tbl-ic { position: relative; width: 14px; height: 13px; margin: 0 5px 0 3px; flex: none; }
.tbl-ic svg { display: block; width: 14px; height: 13px; }
.badge { position: absolute; left: 6px; top: 7px; width: 12px; height: 12px; border-radius: 50%; background: #f2c811; }
.badge::after { content: ""; position: absolute; left: 3.500px; top: 3px; width: 5px; height: 3px; border-left: 1.2px solid #323130; border-bottom: 1.2px solid #323130; transform: rotate(-45deg); }
.fr { height: 24px; display: flex; align-items: center; padding-left: 40px; white-space: nowrap; }
.cb { display: block; position: relative; width: 12px; height: 12px; border: 1px solid #a19f9d; border-radius: 2px; background: #f8f8f8; flex: none; }
.cb.on { background: #f2c811; border-color: #f2c811; }
.cb.on::after { content: ""; position: absolute; left: 2px; top: 1.500px; width: 6px; height: 3px; border-left: 1px solid #8a6a1f; border-bottom: 1px solid #8a6a1f; transform: rotate(-45deg); }
.fi { width: 13px; height: 15px; margin: 0 5px 0 3px; flex: none; }
```
